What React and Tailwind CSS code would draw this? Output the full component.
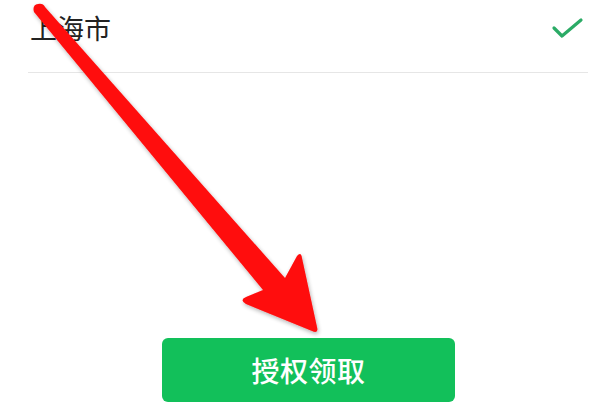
export default function App() {
  const font = { fontFamily: '"Noto Sans CJK SC", "Noto Sans", sans-serif' };
  return (
    <div className="relative w-[600px] h-[406px] bg-white overflow-hidden" style={font}>
      <div className="ml-[28px] mr-[12px] h-[73px] border-b border-[#e6e6e6] flex items-start justify-between">
        <span className="pl-[2px] pt-[12px] text-[27px] leading-[32px] text-[#222222]">上海市</span>
        <svg width="36" height="30" viewBox="0 0 36 30" className="mt-[12px] mr-[2px]">
          <path d="M4 16 L12 24 L31 8" fill="none" stroke="#2bab66" strokeWidth="3.2" strokeLinecap="round" strokeLinejoin="round" />
        </svg>
      </div>
      <div className="mt-[265px] ml-[162px] w-[293px] h-[64px] rounded-[6px] bg-[#12c05a] flex items-center justify-center">
        <span className="text-[28px] leading-none font-medium text-white tracking-[0.5px]">授权领取</span>
      </div>
      <svg className="absolute left-0 top-0 pointer-events-none" width="600" height="406" viewBox="0 0 600 406">
        <defs>
          <filter id="sh" x="-20%" y="-20%" width="140%" height="140%">
            <feGaussianBlur in="SourceAlpha" stdDeviation="2" />
            <feOffset dx="1" dy="2" result="b" />
            <feComponentTransfer><feFuncA type="linear" slope="0.3" /></feComponentTransfer>
            <feMerge><feMergeNode /><feMergeNode in="SourceGraphic" /></feMerge>
          </filter>
        </defs>
        <path
          filter="url(#sh)"
          fill="#ff0a0a"
          d="M34 12 Q32 5 38 4 Q43 3 45 7 L285 278 L297 256 Q301 251 302 258 L317 327 Q319 334 312 331 L246 304 Q239 300 246 297 L263 290 Z"
        />
      </svg>
    </div>
  );
}
